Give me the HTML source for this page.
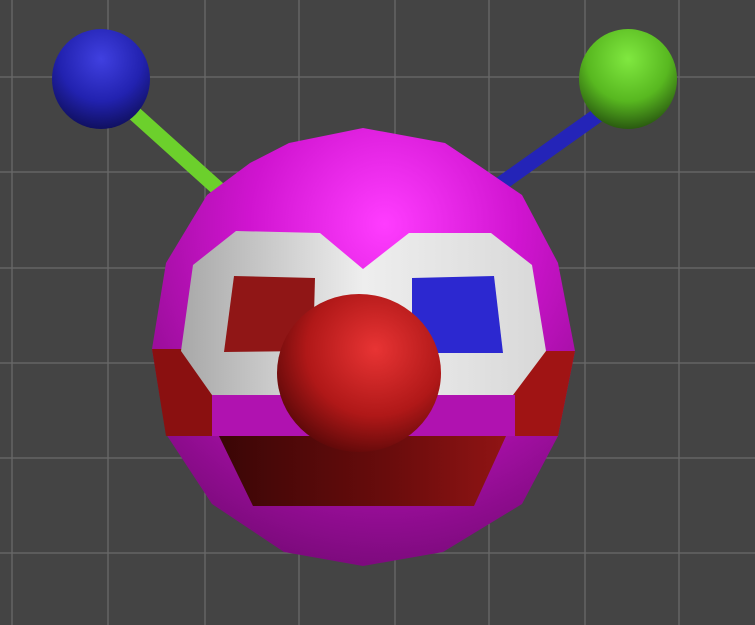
<!DOCTYPE html>
<html><head><style>html,body{margin:0;padding:0;background:#444;}svg{display:block}</style></head><body>
<svg width="755" height="625" viewBox="0 0 755 625" xmlns="http://www.w3.org/2000/svg">
<defs>
<radialGradient id="head" cx="0.55" cy="0.22" r="0.8">
<stop offset="0" stop-color="#ff3cff"/><stop offset="0.4" stop-color="#d014d0"/><stop offset="1" stop-color="#7a0a7a"/></radialGradient>
<radialGradient id="nose" cx="0.6" cy="0.35" r="0.7">
<stop offset="0" stop-color="#e83434"/><stop offset="0.6" stop-color="#b01818"/><stop offset="1" stop-color="#5a0808"/></radialGradient>
<radialGradient id="bb" cx="0.5" cy="0.3" r="0.7">
<stop offset="0" stop-color="#4040e0"/><stop offset="0.6" stop-color="#2222b0"/><stop offset="1" stop-color="#101060"/></radialGradient>
<radialGradient id="gb" cx="0.5" cy="0.3" r="0.7">
<stop offset="0" stop-color="#80e840"/><stop offset="0.6" stop-color="#58b820"/><stop offset="1" stop-color="#2a5a10"/></radialGradient>
<linearGradient id="white" x1="0" y1="0" x2="1" y2="0">
<stop offset="0" stop-color="#a8a8a8"/><stop offset="0.5" stop-color="#eeeeee"/><stop offset="1" stop-color="#d8d8d8"/></linearGradient>
<linearGradient id="mouth" x1="0" y1="0" x2="1" y2="0">
<stop offset="0" stop-color="#3a0606"/><stop offset="0.6" stop-color="#6a0c0c"/><stop offset="1" stop-color="#901414"/></linearGradient>
</defs>
<g stroke="#6a6a6a" stroke-width="1.3">
<line x1="12" y1="0" x2="12" y2="625"/><line x1="108" y1="0" x2="108" y2="625"/><line x1="205" y1="0" x2="205" y2="625"/><line x1="299" y1="0" x2="299" y2="625"/><line x1="395" y1="0" x2="395" y2="625"/><line x1="489" y1="0" x2="489" y2="625"/><line x1="585" y1="0" x2="585" y2="625"/><line x1="679" y1="0" x2="679" y2="625"/>
<line x1="0" y1="77" x2="755" y2="77"/><line x1="0" y1="172" x2="755" y2="172"/><line x1="0" y1="268" x2="755" y2="268"/><line x1="0" y1="363" x2="755" y2="363"/><line x1="0" y1="458" x2="755" y2="458"/><line x1="0" y1="553" x2="755" y2="553"/>
</g>
<line x1="125" y1="105" x2="225" y2="195" stroke="#6cd02c" stroke-width="15"/>
<line x1="605" y1="110" x2="495" y2="188" stroke="#2424b8" stroke-width="15"/>
<ellipse cx="101" cy="79" rx="49" ry="50" fill="url(#bb)"/>
<ellipse cx="628" cy="79" rx="49" ry="50" fill="url(#gb)"/>
<polygon points="363,128 445,143 481,167 522,195 558,263 575,351 558,436 522,504 443,552 363,566 284,552 212,504 166,434 152,349 166,263 207,195 250,163 289,143" fill="url(#head)"/>
<polygon points="152,349 212,349 218,436 166,436" fill="#8a1010"/>
<polygon points="515,351 575,351 558,436 506,436" fill="#a01414"/>
<rect x="212" y="395" width="303" height="41" fill="#b012b0"/>
<polygon points="219,436 506,436 474,506 253,506" fill="url(#mouth)"/>
<polygon points="236,231 320,233 363,269 409,233 491,233 532,265 546,351 513,395 212,395 181,351 193,265" fill="url(#white)"/>
<polygon points="234,276 315,278 313,351 224,352" fill="#901616"/>
<polygon points="412,278 494,276 503,353 412,353" fill="#2c28d0"/>
<ellipse cx="359" cy="373" rx="82" ry="79" fill="url(#nose)"/>
</svg>
</body></html>
